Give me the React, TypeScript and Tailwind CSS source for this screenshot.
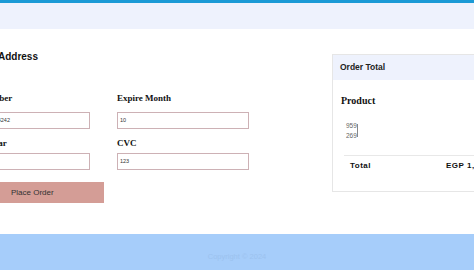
import React from "react";

const serif = { fontFamily: '"Liberation Serif", "Times New Roman", serif' };

function Field({
  label,
  value,
  labelClass,
}: {
  label: string;
  value: string;
  labelClass: string;
}) {
  return (
    <div className="flex flex-col">
      <label className={`text-[9px] leading-[12px] font-bold text-[#111] whitespace-nowrap ${labelClass}`} style={serif}>
        {label}
      </label>
      <div className="h-[17px] border border-[#cdb1b5] bg-white flex items-center px-[2px] text-[5.5px] text-[#333] overflow-hidden whitespace-nowrap">
        {value}
      </div>
    </div>
  );
}

export default function App() {
  return (
    <div
      className="w-[474px] h-[270px] overflow-hidden flex flex-col bg-white"
      style={{ fontFamily: '"Liberation Sans", Arial, sans-serif' }}
    >
      <div className="h-[3px] shrink-0 bg-[#1b9ad6]" />
      <div className="h-[26px] shrink-0 bg-[#eef2fd]" />
      <div className="flex-1 flex min-h-0">
        <div className="w-[332px] shrink-0 pt-[22px]">
          <h2 className="text-[10px] leading-[12px] font-bold text-[#111] -ml-[35px] whitespace-nowrap">
            Billing Address
          </h2>
          <div className="mt-[29px] -ml-[42px] grid grid-cols-[132px_132px] gap-x-[27px] gap-y-[8px]">
            <Field label="Card Number" value="4242424242424242" labelClass="mb-[8px]" />
            <Field label="Expire Month" value="10" labelClass="mb-[8px]" />
            <Field label="Expire Year" value="" labelClass="mb-[4px] ml-[3px]" />
            <Field label="CVC" value="123" labelClass="mb-[4px]" />
          </div>
          <button className="mt-[12px] w-[104px] h-[21px] bg-[#d49d96] text-left pl-[11px] text-[8px] text-[#333]">
            Place Order
          </button>
        </div>
        <div className="w-[170px] shrink-0 mt-[25px] h-[138px] border border-[#e6e6e6] flex flex-col">
          <div className="h-[25px] shrink-0 bg-[#eef2fd] px-[7px] flex items-center text-[8.5px] font-bold text-[#222]">
            Order Total
          </div>
          <div className="px-[8px] pt-[15px]">
            <div className="text-[10px] leading-[12px] font-bold text-[#111]" style={serif}>
              Product
            </div>
            <div className="relative ml-[5px] mt-[14px] text-[6.5px] leading-[10px] text-[#666]">
              <div>959</div>
              <div>269</div>
              <div className="absolute left-[11px] top-[3px] w-px h-[13px] bg-[#888]" />
            </div>
            <div className="ml-[3px] mt-[14px] border-t border-[#e8e8e8] pt-[5px] flex text-[8px] leading-[10px] font-bold tracking-[0.5px] text-[#111]">
              <span className="ml-[6px] w-[96px] shrink-0">Total</span>
              <span className="whitespace-nowrap">EGP 1,228.00</span>
            </div>
          </div>
        </div>
      </div>
      <div className="h-[36px] shrink-0 bg-[#a6cdfa] flex justify-center pt-[19px]">
        <span className="text-[7.5px] leading-[8px] text-[#9cc2ef]">Copyright © 2024</span>
      </div>
    </div>
  );
}
